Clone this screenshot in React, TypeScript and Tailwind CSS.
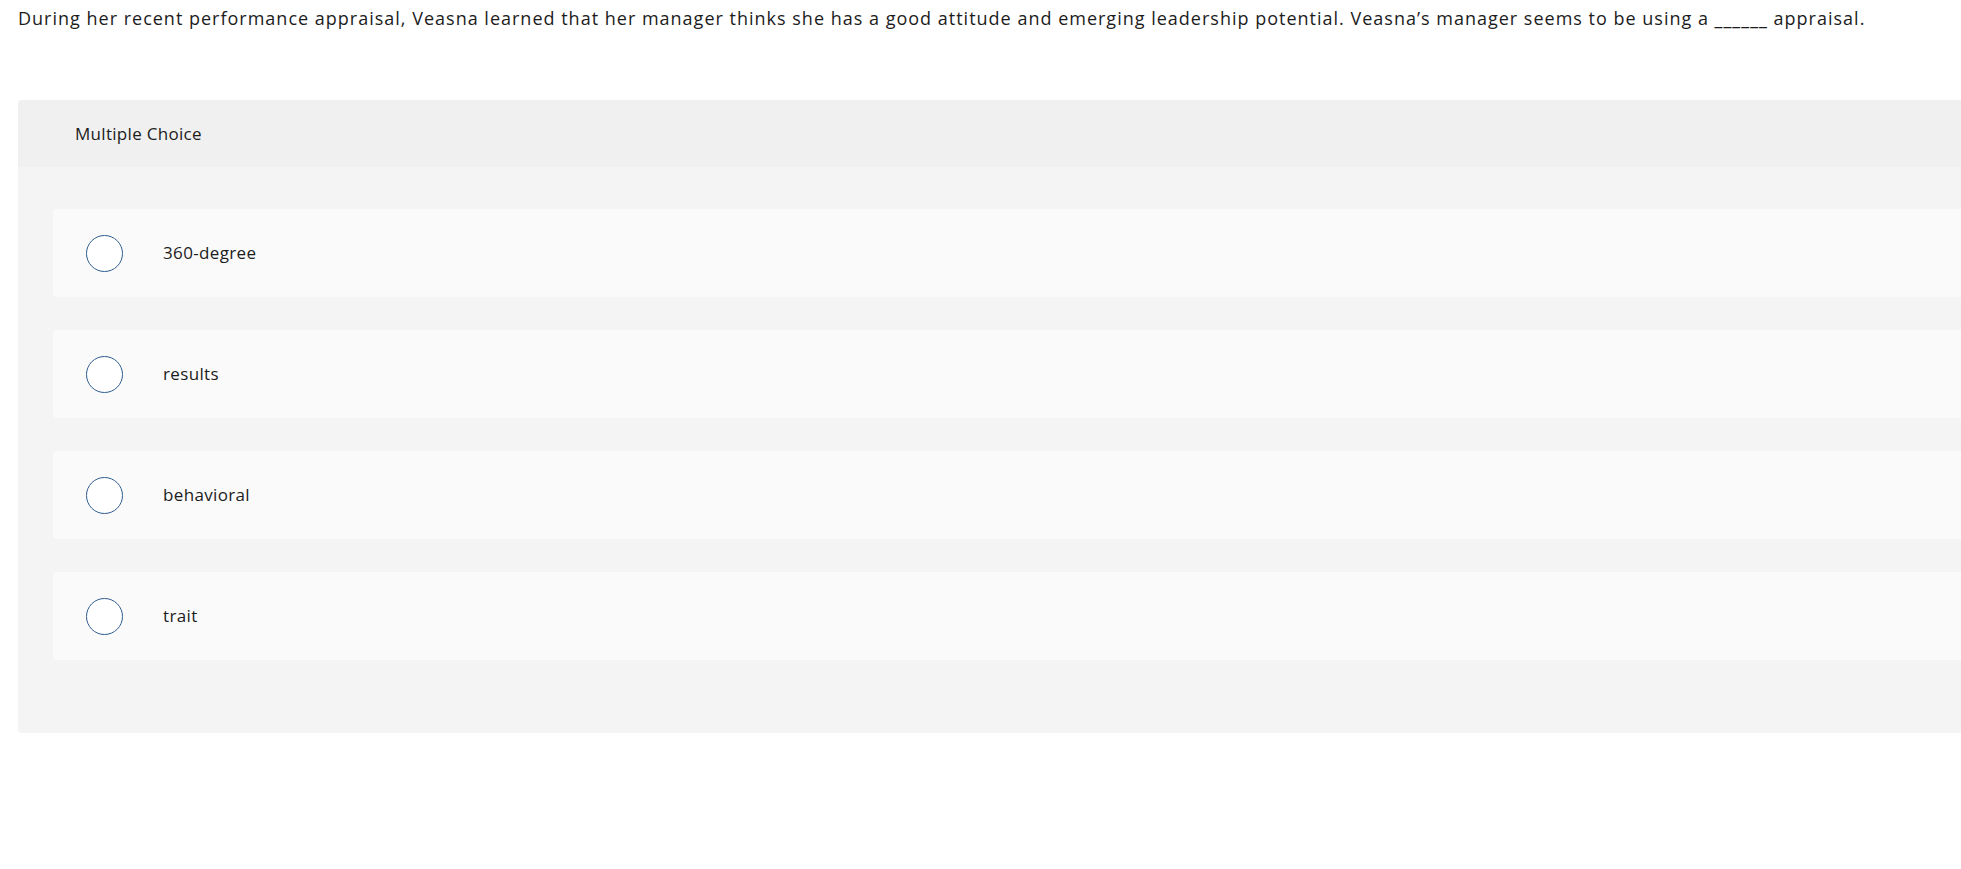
const choices = ["360-degree", "results", "behavioral", "trait"];

export default function App() {
  return (
    <div className="w-screen min-h-[869px] overflow-hidden bg-white text-[#1c1c1c] font-['Open_Sans','Liberation_Sans',sans-serif]">
      <p className="pl-[18px] pt-[7px] text-[18px] leading-[22px] tracking-[1px] whitespace-nowrap">
        During her recent performance appraisal, Veasna learned that her manager thinks she has a good attitude and
        emerging leadership potential. Veasna’s manager seems to be using a ______ appraisal.
      </p>

      <div className="ml-[18px] mt-[71px] w-[2000px] rounded-[4px] bg-[#f4f4f4]">
        <div className="flex h-[67px] items-center rounded-t-[4px] bg-[#f0f0f0] pl-[57px] text-[17px] tracking-[0.3px]">
          Multiple Choice
        </div>
        <div className="flex flex-col gap-[33px] pl-[35px] pt-[42px] pb-[73px]">
          {choices.map((c) => (
            <div key={c} className="flex h-[88px] items-center rounded-[4px] bg-[#fafafa] pl-[33px]">
              <span className="h-[37px] w-[37px] shrink-0 rounded-full border border-[#2f5d8f] bg-white" />
              <span className="ml-[40px] text-[17px] tracking-[0.35px]">{c}</span>
            </div>
          ))}
        </div>
      </div>
    </div>
  );
}
